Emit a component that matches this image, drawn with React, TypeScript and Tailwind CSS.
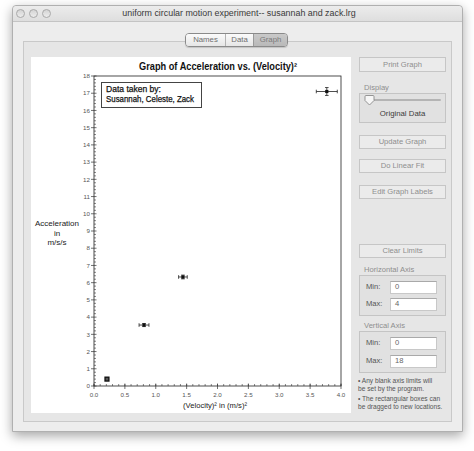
import React from "react";

const X0 = 63, X1 = 310, YT = 19, YB = 329;
const sx = (v: number) => X0 + (v / 4) * (X1 - X0);
const sy = (v: number) => YB - (v / 18) * (YB - YT);
const FF = "Liberation Sans, Arial, sans-serif";

function Chart() {
  const yMajor = Array.from({ length: 19 }, (_, i) => i);
  const yMinor = Array.from({ length: 91 }, (_, i) => i * 0.2).filter(
    (v) => Math.abs(v - Math.round(v)) > 0.01
  );
  const xMajor = Array.from({ length: 9 }, (_, i) => i * 0.5);
  const xMinor = Array.from({ length: 41 }, (_, i) => i * 0.1);
  const pts = [
    { x: 0.81, y: 3.54, ex: 0.08, ey: 0.06 },
    { x: 1.44, y: 6.33, ex: 0.07, ey: 0.08 },
    { x: 3.77, y: 17.1, ex: 0.17, ey: 0.2 },
  ];
  return (
    <svg width="320" height="356" viewBox="0 0 320 356" style={{ fontFamily: FF }}>
      <text x={108} y={13} fontSize="10" fontWeight="bold" fill="#111" textLength={158} lengthAdjust="spacingAndGlyphs">
        Graph of Acceleration vs. (Velocity)²
      </text>
      <rect x={X0} y={YT} width={X1 - X0} height={YB - YT} fill="none" stroke="#222" strokeWidth="0.8" />
      {yMinor.map((v) => (
        <line key={"ym" + v} x1={X0} x2={X0 + 2} y1={sy(v)} y2={sy(v)} stroke="#333" strokeWidth="0.6" />
      ))}
      {yMajor.map((v) => (
        <g key={"yM" + v}>
          <line x1={X0 - 3} x2={X0 + 2.5} y1={sy(v)} y2={sy(v)} stroke="#333" strokeWidth="0.7" />
          <text x={X0 - 4} y={sy(v) + 2.2} fontSize="6.2" fill="#555" textAnchor="end">
            {v}
          </text>
        </g>
      ))}
      {xMinor.map((v) => (
        <line key={"xm" + v} x1={sx(v)} x2={sx(v)} y1={YB} y2={YB - 2} stroke="#333" strokeWidth="0.6" />
      ))}
      {xMajor.map((v) => (
        <g key={"xM" + v}>
          <line x1={sx(v)} x2={sx(v)} y1={YB - 2.5} y2={YB + 3} stroke="#333" strokeWidth="0.7" />
          <text x={sx(v)} y={339.5} fontSize="6.2" fill="#555" textAnchor="middle">
            {v.toFixed(1)}
          </text>
        </g>
      ))}
      <text x={184} y={351} fontSize="8" fill="#222" textAnchor="middle" textLength={64} lengthAdjust="spacingAndGlyphs">
        (Velocity)² in (m/s)²
      </text>
      <g fontSize="8" fill="#222" textAnchor="middle">
        <text x={26} y={169}>Acceleration</text>
        <text x={26} y={178.5}>in</text>
        <text x={26} y={188}>m/s/s</text>
      </g>
      <rect x={sx(0.21) - 2.6} y={sy(0.4) - 2.6} width="5.2" height="5.2" fill="#111" />
      <rect x={sx(0.21) - 1.3} y={sy(0.4) - 1.3} width="2.6" height="2.6" fill="#555" />
      {pts.map((p, i) => {
        const cx = sx(p.x), cy = sy(p.y);
        const xl = sx(p.x - p.ex), xr = sx(p.x + p.ex);
        const yt = sy(p.y + p.ey), yb = sy(p.y - p.ey);
        return (
          <g key={i} stroke="#222" strokeWidth="0.8">
            <line x1={xl} x2={xr} y1={cy} y2={cy} />
            <line x1={xl} x2={xl} y1={cy - 1.8} y2={cy + 1.8} />
            <line x1={xr} x2={xr} y1={cy - 1.8} y2={cy + 1.8} />
            <line x1={cx} x2={cx} y1={yt - 0.5} y2={yb + 0.5} />
            <line x1={cx - 1.8} x2={cx + 1.8} y1={yt - 0.5} y2={yt - 0.5} />
            <line x1={cx - 1.8} x2={cx + 1.8} y1={yb + 0.5} y2={yb + 0.5} />
            <rect x={cx - 1.6} y={cy - 1.6} width="3.2" height="3.2" fill="#111" stroke="none" />
          </g>
        );
      })}
      <rect x={70.5} y={25.5} width={100} height={25} fill="#fff" stroke="#444" strokeWidth="1" />
      <g fontSize="8.6" fill="#111" stroke="#111" strokeWidth="0.25">
        <text x={75} y={35.3} textLength={55} lengthAdjust="spacingAndGlyphs">
          Data taken by:
        </text>
        <text x={75} y={45} textLength={88} lengthAdjust="spacingAndGlyphs">
          Susannah, Celeste, Zack
        </text>
      </g>
    </svg>
  );
}

function Btn({ label, className = "" }: { label: string; className?: string }) {
  return (
    <div
      className={
        "h-[14px] w-full flex items-center justify-center border border-[#c6c6c6] bg-[#ebebeb] text-[7.6px] text-[#8e8e8e] leading-none " +
        className
      }
    >
      {label}
    </div>
  );
}

function Field({ label, value }: { label: string; value: string }) {
  return (
    <div className="flex items-center h-[13px]">
      <span className="w-[24px] text-[7.6px] text-[#555] leading-none">{label}</span>
      <div className="w-[47px] h-[13px] bg-white border border-[#c8c8c8] border-t-[#a9a9a9] flex items-center pl-[4px] text-[7.6px] text-[#666] leading-none">
        {value}
      </div>
    </div>
  );
}

export default function App() {
  return (
    <div
      className="w-[474px] h-[451px] bg-white overflow-hidden pt-[5px] pl-[12px]"
      style={{ fontFamily: FF }}
    >
      <div className="w-[451px] h-[427px] flex flex-col bg-[#ededed] border border-[#b0b0b0] rounded-t-[4px] shadow-[0_4px_12px_rgba(0,0,0,0.35)]">
        <div className="h-[16px] relative flex items-center bg-linear-to-b from-[#ececec] to-[#dedede] border-b border-[#c4c4c4] rounded-t-[4px]">
          <div className="flex gap-[4px] pl-[3px]">
            {[0, 1, 2].map((i) => (
              <div
                key={i}
                className="w-[9px] h-[9px] rounded-full border border-[#a9a9a9] bg-linear-to-b from-[#d4d4d4] to-[#ececec]"
              />
            ))}
          </div>
          <div className="absolute inset-0 flex items-center justify-center text-[8.9px] text-[#3a3a3a] pl-[3px]">
            uniform circular motion experiment-- susannah and zack.lrg
          </div>
        </div>
        <div className="flex-1 flex pt-[19px] pl-[10px] pr-[10px] pb-[9px]">
          <div className="relative flex-1 flex border border-[#c9c9c9] bg-[#e6e6e6] pt-[15px] pl-[7px] pr-[5px] pb-[8px] gap-[8px]">
            <div className="absolute top-[-9px] left-[161px] h-[14px] flex rounded-[4px] border border-[#8a8a8a] overflow-hidden text-[7.8px] leading-none text-[#6e6e6e] shadow-[0_1px_1px_rgba(0,0,0,0.15)]">
              <div className="w-[40px] flex items-center justify-center bg-linear-to-b from-[#fbfbfb] to-[#e6e6e6] border-r border-[#b3b3b3]">
                Names
              </div>
              <div className="w-[28px] flex items-center justify-center bg-linear-to-b from-[#fbfbfb] to-[#e6e6e6] border-r border-[#9a9a9a]">
                Data
              </div>
              <div className="w-[33px] flex items-center justify-center bg-linear-to-b from-[#c9c9c9] to-[#b9b9b9] text-[#7a7a7a]">
                Graph
              </div>
            </div>
            <div className="w-[320px] h-[356px] bg-white">
              <Chart />
            </div>
            <div className="w-[87px] flex flex-col">
              <div className="h-[15px] w-full flex items-center justify-center border border-[#c6c6c6] bg-[#ebebeb] text-[7.6px] text-[#8e8e8e] leading-none">
                Print Graph
              </div>
              <div className="mt-[10px] h-[11px] pl-[5px] text-[7.6px] text-[#8e8e8e] leading-[11px]">Display</div>
              <div className="h-[30px] border border-[#c4c4c4] bg-[#e1e1e1] flex flex-col">
                <div className="relative h-[13px]">
                  <div className="absolute left-[8px] right-[4px] top-[5px] h-[2px] bg-[#b4b4b4] rounded-full" />
                  <svg className="absolute left-[4px] top-[1px]" width="11" height="11" viewBox="0 0 11 11">
                    <path
                      d="M1 1.5 Q1 0.5 2 0.5 L9 0.5 Q10 0.5 10 1.5 L10 5.5 L5.5 10 L1 5.5 Z"
                      fill="#f6f6f6"
                      stroke="#8a8a8a"
                      strokeWidth="0.9"
                    />
                  </svg>
                </div>
                <div className="flex-1 flex items-center justify-center text-[7.8px] text-[#3c3c3c] leading-none pb-[2px]">
                  Original Data
                </div>
              </div>
              <Btn label="Update Graph" className="mt-[12px]" />
              <Btn label="Do Linear Fit" className="mt-[10px]" />
              <Btn label="Edit Graph Labels" className="mt-[12px]" />
              <Btn label="Clear Limits" className="mt-[45px]" />
              <div className="mt-[7px] h-[10px] pl-[5px] text-[7.6px] text-[#8e8e8e] leading-[10px]">Horizontal Axis</div>
              <div className="h-[41px] border border-[#c4c4c4] bg-[#e1e1e1] flex flex-col justify-center gap-[4px] pl-[6px]">
                <Field label="Min:" value="0" />
                <Field label="Max:" value="4" />
              </div>
              <div className="mt-[5px] h-[10px] pl-[5px] text-[7.6px] text-[#8e8e8e] leading-[10px]">Vertical Axis</div>
              <div className="h-[42px] border border-[#c4c4c4] bg-[#e1e1e1] flex flex-col justify-center gap-[5px] pl-[6px]">
                <Field label="Min:" value="0" />
                <Field label="Max:" value="18" />
              </div>
              <div className="mt-[4px] text-[6.6px] leading-[8px] text-[#555] -ml-[1px] whitespace-nowrap">
                <div>• Any blank axis limits will</div>
                <div>be set by the program.</div>
                <div className="mt-[2px]">• The rectangular boxes can</div>
                <div>be dragged to new locations.</div>
              </div>
            </div>
          </div>
        </div>
      </div>
    </div>
  );
}
